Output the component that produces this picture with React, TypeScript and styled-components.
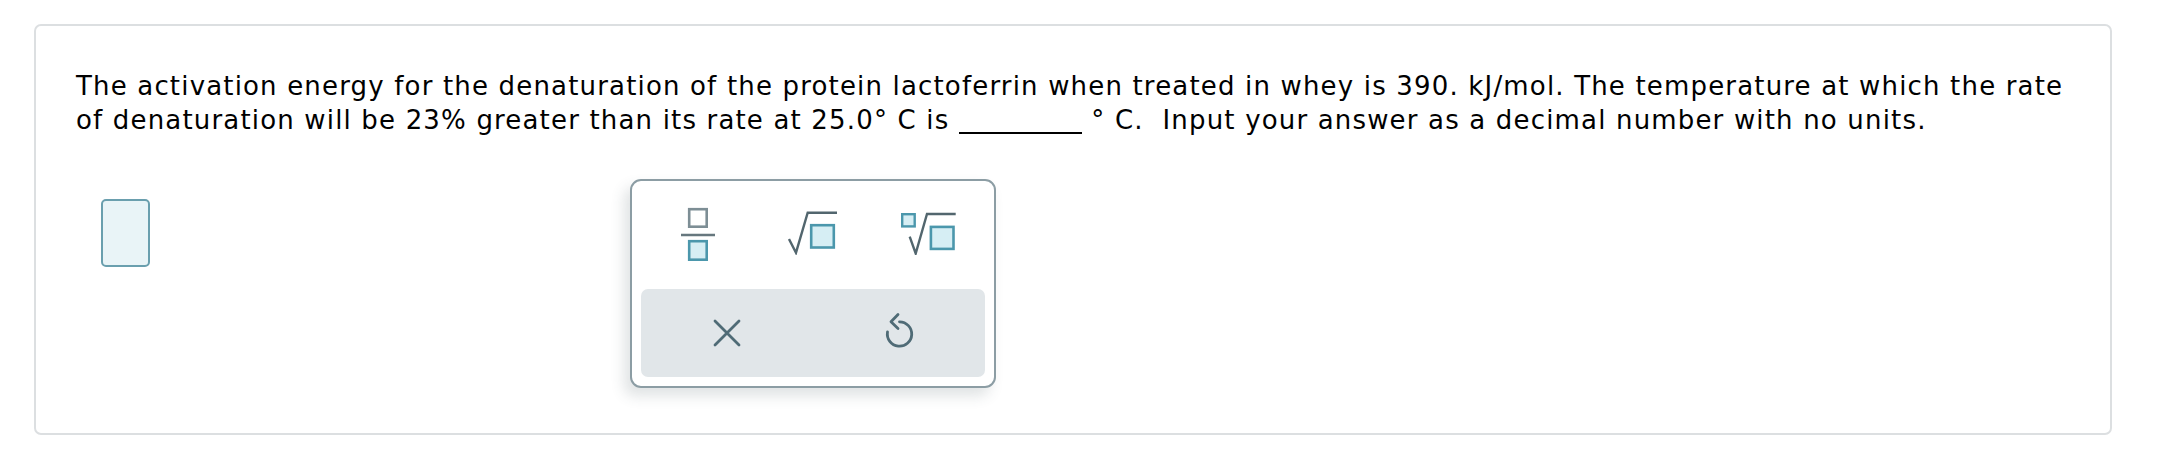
import React from "react";
import styled, { createGlobalStyle } from "styled-components";

const Global = createGlobalStyle`
  html, body { margin: 0; padding: 0; background: #ffffff; }
  body { font-family: "DejaVu Sans", Verdana, sans-serif; }
`;

const Page = styled.div`
  padding: 24px 0 0 34px;
`;

const Card = styled.section`
  box-sizing: border-box;
  width: 2078px;
  height: 411px;
  border: 2px solid #dcdfe1;
  border-radius: 7px;
  background: #fff;
  padding: 43px 0 0 40px;
`;

const Question = styled.p`
  margin: 0;
  font-family: "DejaVu Sans", Verdana, sans-serif;
  font-size: 26px;
  line-height: 34px;
  letter-spacing: 1.17px;
  color: #000;
  white-space: nowrap;
`;

const Blank = styled.span`
  display: inline-block;
  width: 123px;
  height: 2px;
  border-bottom: 2px solid #000;
  margin-bottom: -5px;
`;

const AnswerRow = styled.div`
  display: flex;
  align-items: flex-start;
  margin-top: 42px;
  padding-left: 25px;
`;

const AnswerBox = styled.div`
  box-sizing: border-box;
  width: 49px;
  height: 68px;
  margin-top: 20px;
  border: 2px solid #6a9fae;
  border-radius: 5px;
  background: #e9f4f7;
`;

const Palette = styled.div`
  box-sizing: border-box;
  width: 366px;
  height: 209px;
  margin-left: 480px;
  border: 2px solid #8c9da4;
  border-radius: 11px;
  background: #fff;
  padding: 0 9px 9px;
  display: flex;
  flex-direction: column;
  box-shadow: -6px 8px 14px rgba(60, 80, 90, 0.16);
`;

const IconRow = styled.div`
  display: grid;
  grid-template-columns: repeat(3, 1fr);
  height: 108px;
  align-items: center;
  justify-items: center;
`;

const ActionRow = styled.div`
  flex: 1;
  display: grid;
  grid-template-columns: repeat(2, 1fr);
  align-items: center;
  justify-items: center;
  background: #e1e6e9;
  border-radius: 7px;
`;

const IconButton = styled.button<{ $dy?: number }>`
  border: none;
  background: transparent;
  padding: 0;
  display: flex;
  align-items: center;
  justify-content: center;
  transform: translateY(${(p) => p.$dy ?? 0}px);
  cursor: pointer;
`;

const GRAY = "#7d8e95";
const DARK = "#52666e";
const TEAL = "#4b97ac";
const FILL = "#d6eef4";

const FractionIcon = () => (
  <svg width="36" height="56" viewBox="0 0 36 56">
    <rect x="9.2" y="2.2" width="17.5" height="17.5" fill="none" stroke={GRAY} strokeWidth="2.6" />
    <line x1="1" y1="28" x2="35" y2="28" stroke="#66777e" strokeWidth="2.6" />
    <rect x="9.2" y="34.2" width="17.5" height="18.5" fill={FILL} stroke={TEAL} strokeWidth="2.6" />
  </svg>
);

const SqrtIcon = () => (
  <svg width="50" height="44" viewBox="0 0 50 44">
    <polyline points="1,28 8,41.7 19.7,1.7 49,1.7" fill="none" stroke={DARK} strokeWidth="2.4" />
    <rect x="23.2" y="14.2" width="22.6" height="22.3" fill={FILL} stroke={TEAL} strokeWidth="2.6" />
  </svg>
);

const NthRootIcon = () => (
  <svg width="58" height="44" viewBox="0 0 58 44">
    <rect x="3.2" y="3.2" width="12.5" height="12.2" fill={FILL} stroke={TEAL} strokeWidth="2.4" />
    <polyline points="10.7,25.7 16.7,42.5 28,3 56.7,3" fill="none" stroke={DARK} strokeWidth="2.4" />
    <rect x="31.9" y="15.9" width="22.6" height="22" fill={FILL} stroke={TEAL} strokeWidth="2.6" />
  </svg>
);

const ClearIcon = () => (
  <svg width="28" height="28" viewBox="0 0 28 28">
    <path d="M2 2 L26 26 M26 2 L2 26" stroke="#4f6b76" strokeWidth="2.8" strokeLinecap="round" />
  </svg>
);

const UndoIcon = () => (
  <svg width="32" height="40" viewBox="0 0 32 40">
    <path
      d="M16.5 10.8 A12.2 12.2 0 1 1 4.5 21"
      fill="none"
      stroke="#4f6b76"
      strokeWidth="2.8"
      strokeLinecap="round"
    />
    <path
      d="M15 3.5 L8 10.8 L15 17.5"
      fill="none"
      stroke="#4f6b76"
      strokeWidth="2.8"
      strokeLinecap="round"
      strokeLinejoin="round"
    />
  </svg>
);

export default function App() {
  return (
    <>
      <Global />
      <Page>
        <Card>
          <Question>
            The activation energy for the denaturation of the protein lactoferrin when treated in whey is 390. kJ/mol. The temperature at which the rate
            <br />
            of denaturation will be 23% greater than its rate at 25.0° C is <Blank aria-label="blank" /> ° C.&nbsp; Input your answer as a decimal number with no units.
          </Question>
          <AnswerRow>
            <AnswerBox />
            <Palette>
              <IconRow>
                <IconButton aria-label="fraction" $dy={0}>
                  <FractionIcon />
                </IconButton>
                <IconButton aria-label="square root" $dy={-2}>
                  <SqrtIcon />
                </IconButton>
                <IconButton aria-label="nth root" $dy={-2}>
                  <NthRootIcon />
                </IconButton>
              </IconRow>
              <ActionRow>
                <IconButton aria-label="clear">
                  <ClearIcon />
                </IconButton>
                <IconButton aria-label="undo" $dy={-2}>
                  <UndoIcon />
                </IconButton>
              </ActionRow>
            </Palette>
          </AnswerRow>
        </Card>
      </Page>
    </>
  );
}
